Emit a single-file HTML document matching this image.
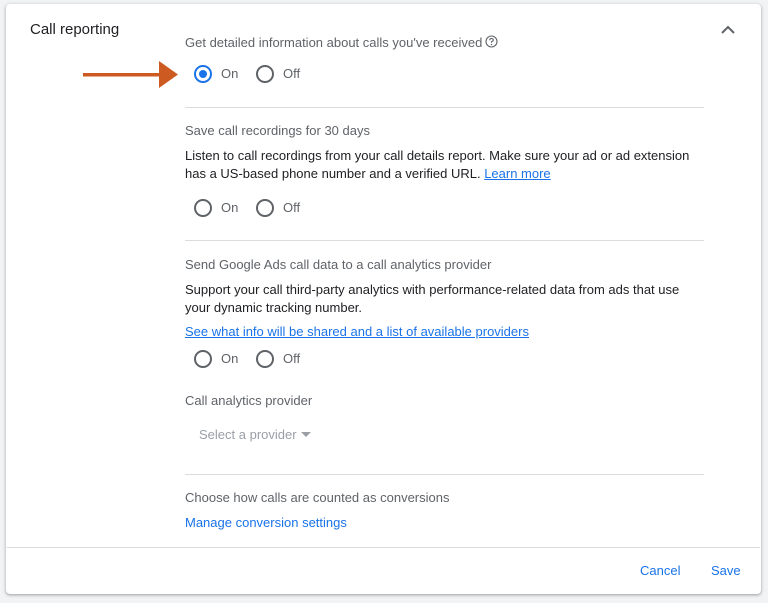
<!DOCTYPE html>
<html><head><meta charset="utf-8"><style>
*{margin:0;padding:0;box-sizing:border-box}
body{width:768px;height:603px;background:#f1f3f4;font-family:"Liberation Sans",Arial,sans-serif;position:relative;overflow:hidden}
.card{position:absolute;left:6px;top:4px;width:755px;height:590px;background:#fff;border-radius:4px;box-shadow:0 1px 2px rgba(60,64,67,.3),0 1px 3px 1px rgba(60,64,67,.15)}
.t{position:absolute;font-size:13px;white-space:nowrap;line-height:18px}
.g{color:#5f6368}
.d{color:#202124}
.l{color:#1a73e8}
.u{text-decoration:underline}
.hr{position:absolute;left:185px;width:519px;height:1px;background:#dadce0}
.r{position:absolute;width:18px;height:18px;border:2px solid #5f6368;border-radius:50%}
.r.on{border-color:#1a73e8}
.r.on::after{content:"";position:absolute;left:3px;top:3px;width:8px;height:8px;border-radius:50%;background:#1a73e8}
</style></head><body>
<div class="card"></div>
<div class="t d" style="left:30px;top:21px;font-size:15px">Call reporting</div>
<svg style="position:absolute;left:719px;top:23px" width="18" height="14"><path d="M3 10 L9 4 L15 10" stroke="#5f6368" stroke-width="2" fill="none"/></svg>

<div class="t g" style="left:185px;top:34px">Get detailed information about calls you've received</div>
<svg style="position:absolute;left:485px;top:35px" width="13" height="13" viewBox="0 0 13 13"><circle cx="6.5" cy="6.5" r="5.5" stroke="#5f6368" stroke-width="1.1" fill="none"/><path d="M4.7 5.2 Q4.7 3.5 6.5 3.5 Q8.3 3.5 8.3 5 Q8.3 6 6.5 6.8 L6.5 7.8" stroke="#5f6368" stroke-width="1.1" fill="none"/><circle cx="6.5" cy="9.6" r=".7" fill="#5f6368"/></svg>
<svg style="position:absolute;left:83px;top:61px" width="95" height="28"><rect x="0" y="12" width="80" height="3.5" fill="#cc5a21"/><path d="M76 0 L95 13.5 L76 27 Z" fill="#cc5a21"/></svg>
<div class="r on" style="left:194px;top:65px"></div><div class="t g" style="left:221px;top:65px">On</div>
<div class="r" style="left:256px;top:65px"></div><div class="t g" style="left:283px;top:65px">Off</div>
<div class="hr" style="top:107px"></div>

<div class="t g" style="left:185px;top:122px">Save call recordings for 30 days</div>
<div class="t d" style="left:185px;top:147px">Listen to call recordings from your call details report. Make sure your ad or ad extension</div>
<div class="t d" style="left:185px;top:165px">has a US-based phone number and a verified URL. <span class="l u">Learn more</span></div>
<div class="r" style="left:194px;top:199px"></div><div class="t g" style="left:221px;top:199px">On</div>
<div class="r" style="left:256px;top:199px"></div><div class="t g" style="left:283px;top:199px">Off</div>
<div class="hr" style="top:240px"></div>

<div class="t g" style="left:185px;top:256px">Send Google Ads call data to a call analytics provider</div>
<div class="t d" style="left:185px;top:281px">Support your call third-party analytics with performance-related data from ads that use</div>
<div class="t d" style="left:185px;top:299px">your dynamic tracking number.</div>
<div class="t l u" style="left:185px;top:323px">See what info will be shared and a list of available providers</div>
<div class="r" style="left:194px;top:350px"></div><div class="t g" style="left:221px;top:350px">On</div>
<div class="r" style="left:256px;top:350px"></div><div class="t g" style="left:283px;top:350px">Off</div>

<div class="t g" style="left:185px;top:392px">Call analytics provider</div>
<div class="t" style="left:199px;top:426px;color:#9aa0a6">Select a provider</div>
<svg style="position:absolute;left:301px;top:432px" width="10" height="6"><path d="M0 0 L10 0 L5 5 Z" fill="#9aa0a6"/></svg>
<div class="hr" style="top:474px"></div>

<div class="t g" style="left:185px;top:489px">Choose how calls are counted as conversions</div>
<div class="t l" style="left:185px;top:514px">Manage conversion settings</div>

<div style="position:absolute;left:7px;top:547px;width:753px;height:1px;background:#dadce0"></div>
<div class="t l" style="left:640px;top:562px">Cancel</div>
<div class="t l" style="left:711px;top:562px">Save</div>
</body></html>
